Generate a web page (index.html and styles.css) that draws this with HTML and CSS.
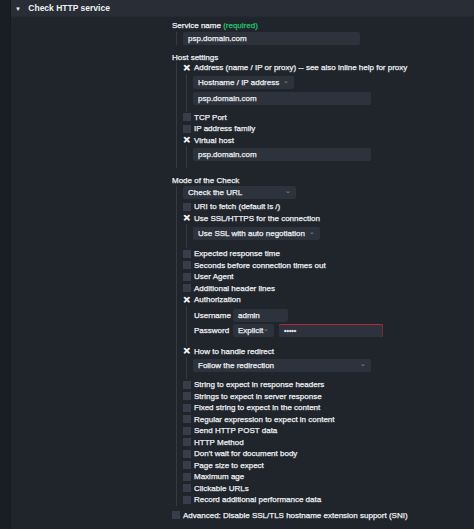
FILE: index.html
```html
<!DOCTYPE html>
<html lang="en">
<head>
  <meta charset="UTF-8" />
  <title>Check HTTP service</title>
  <link rel="stylesheet" href="styles.css">
</head>
<body>

<div class="page">
  <div class="sidebar"></div>

  <div class="panel">
    <div class="panel-head"><span class="caret">&#9660;</span> Check HTTP service</div>

    <div class="form">
      <div class="labels"></div>

      <div class="fields">
        <div class="title first">Service name <span class="req">(required)</span></div>
        <div class="group">
          <div class="input w177">psp.domain.com</div>
        </div>

        <div class="title gap">Host settings</div>
        <div class="group pull">
          <div class="row"><span class="cb on">&#10005;</span>Address (name / IP or proxy) -- see also inline help for proxy</div>
          <div class="sub">
            <div class="select w101">Hostname / IP address <span class="arrow">&#8964;</span></div>
            <div class="input w178 mt3">psp.domain.com</div>
          </div>
          <div class="row"><span class="cb"></span>TCP Port</div>
          <div class="row"><span class="cb"></span>IP address family</div>
          <div class="row"><span class="cb on">&#10005;</span>Virtual host</div>
          <div class="sub">
            <div class="input w178">psp.domain.com</div>
          </div>
        </div>

        <div class="title gap">Mode of the Check</div>
        <div class="group">
          <div class="select w113 mb2">Check the URL <span class="arrow">&#8964;</span></div>
          <div class="row"><span class="cb"></span>URI to fetch (default is /)</div>
          <div class="row"><span class="cb on">&#10005;</span>Use SSL/HTTPS for the connection</div>
          <div class="sub loose">
            <div class="select w127">Use SSL with auto negotiation <span class="arrow">&#8964;</span></div>
          </div>
          <div class="row"><span class="cb"></span>Expected response time</div>
          <div class="row"><span class="cb"></span>Seconds before connection times out</div>
          <div class="row"><span class="cb"></span>User Agent</div>
          <div class="row"><span class="cb"></span>Additional header lines</div>
          <div class="row"><span class="cb on">&#10005;</span>Authorization</div>
          <div class="sub auth">
            <div class="pair">
              <span class="key">Username</span>
              <div class="input w55">admin</div>
            </div>
            <div class="pair">
              <span class="key">Password</span>
              <div class="select w41">Explicit <span class="arrow">&#8964;</span></div>
              <div class="input w104 invalid"><span class="dots">&bull;&bull;&bull;&bull;&bull;</span></div>
            </div>
          </div>
          <div class="row"><span class="cb on">&#10005;</span>How to handle redirect</div>
          <div class="sub">
            <div class="select w178">Follow the redirection <span class="arrow">&#8964;</span></div>
          </div>
          <div class="row"><span class="cb"></span>String to expect in response headers</div>
          <div class="row"><span class="cb"></span>Strings to expect in server response</div>
          <div class="row"><span class="cb"></span>Fixed string to expect in the content</div>
          <div class="row"><span class="cb"></span>Regular expression to expect in content</div>
          <div class="row"><span class="cb"></span>Send HTTP POST data</div>
          <div class="row"><span class="cb"></span>HTTP Method</div>
          <div class="row"><span class="cb"></span>Don't wait for document body</div>
          <div class="row"><span class="cb"></span>Page size to expect</div>
          <div class="row"><span class="cb"></span>Maximum age</div>
          <div class="row"><span class="cb"></span>Clickable URLs</div>
          <div class="row"><span class="cb"></span>Record additional performance data</div>
        </div>

        <div class="row advanced"><span class="cb"></span>Advanced: Disable SSL/TLS hostname extension support (SNI)</div>
      </div>
    </div>
  </div>
</div>

</body>
</html>
```

FILE: styles.css
```css
body {
  margin: 0;
  background-color: #20252c;
  font-family: 'Liberation Sans', Arial, sans-serif;
  font-size: 8px;
  color: #eef0f3;
}

.page {
  display: flex;
  min-height: 529px;
}

.sidebar {
  width: 10px;
  background-color: #1a1e24;
  border-right: 1px solid #15181c;
}

.panel {
  flex: 1;
}

.panel-head {
  height: 16px;
  line-height: 16px;
  padding-left: 4px;
  background-color: #292e36;
  border-bottom: 1px solid #252a31;
  font-weight: bold;
  font-size: 8.5px;
}

.caret {
  font-size: 6px;
  margin-right: 5px;
}

.form {
  display: flex;
}

.labels {
  width: 161px;
}

.fields {
  flex: 1;
  padding-top: 3px;
  -webkit-text-stroke: 0.25px #eef0f3;
}

.title {
  height: 10px;
  line-height: 10px;
}

.title.first {
  margin: 1px 0;
}

.title.gap {
  margin-top: 8px;
}

.req {
  color: #25c26a;
  -webkit-text-stroke: 0.25px #25c26a;
}

.group {
  margin-left: 4px;
  padding-left: 6px;
  border-left: 1px solid #363b43;
}

.group.pull {
  margin-top: -1px;
}

.sub {
  margin-left: 3px;
  padding: 2px 0 7px 6px;
  border-left: 1px solid #363b43;
}

.sub.loose {
  padding: 3px 0 8px 6px;
}

.sub.auth {
  padding: 3px 0 9px 6px;
}

.row {
  display: flex;
  align-items: center;
  height: 11.5px;
}

.cb {
  width: 8px;
  height: 8px;
  margin-right: 3px;
  background-color: #373d4a;
  font-size: 9px;
  line-height: 8px;
  text-align: center;
  flex-shrink: 0;
}

.cb.on {
  background: none;
  color: #ffffff;
  font-weight: bold;
}

.input,
.select {
  height: 13px;
  line-height: 13px;
  padding-left: 5px;
  box-sizing: border-box;
  background-color: #2d333c;
  border-radius: 2px;
  white-space: nowrap;
}

.select {
  position: relative;
}

.arrow {
  position: absolute;
  right: 5px;
  top: -2px;
  font-size: 7px;
  color: #8b919a;
  -webkit-text-stroke: 0;
}

.mt3 {
  margin-top: 3px;
}

.mb2 {
  margin-bottom: 2px;
}

.w41 { width: 41px; }
.w55 { width: 55px; }
.w101 { width: 101px; }
.w104 { width: 104px; }
.w113 { width: 113px; }
.w127 { width: 127px; }
.w177 { width: 177px; }
.w178 { width: 178px; }

.invalid {
  box-shadow: inset 0 1px 0 #b3263e, inset -1px 0 0 #7a2a38;
}

.dots {
  font-size: 7px;
}

.pair {
  display: flex;
  align-items: center;
  gap: 5px;
  margin-bottom: 2px;
}

.pair:last-child {
  margin-bottom: 0;
}

.key {
  width: 34px;
  padding-left: 1px;
}

.advanced {
  margin-top: 4px;
}
```
